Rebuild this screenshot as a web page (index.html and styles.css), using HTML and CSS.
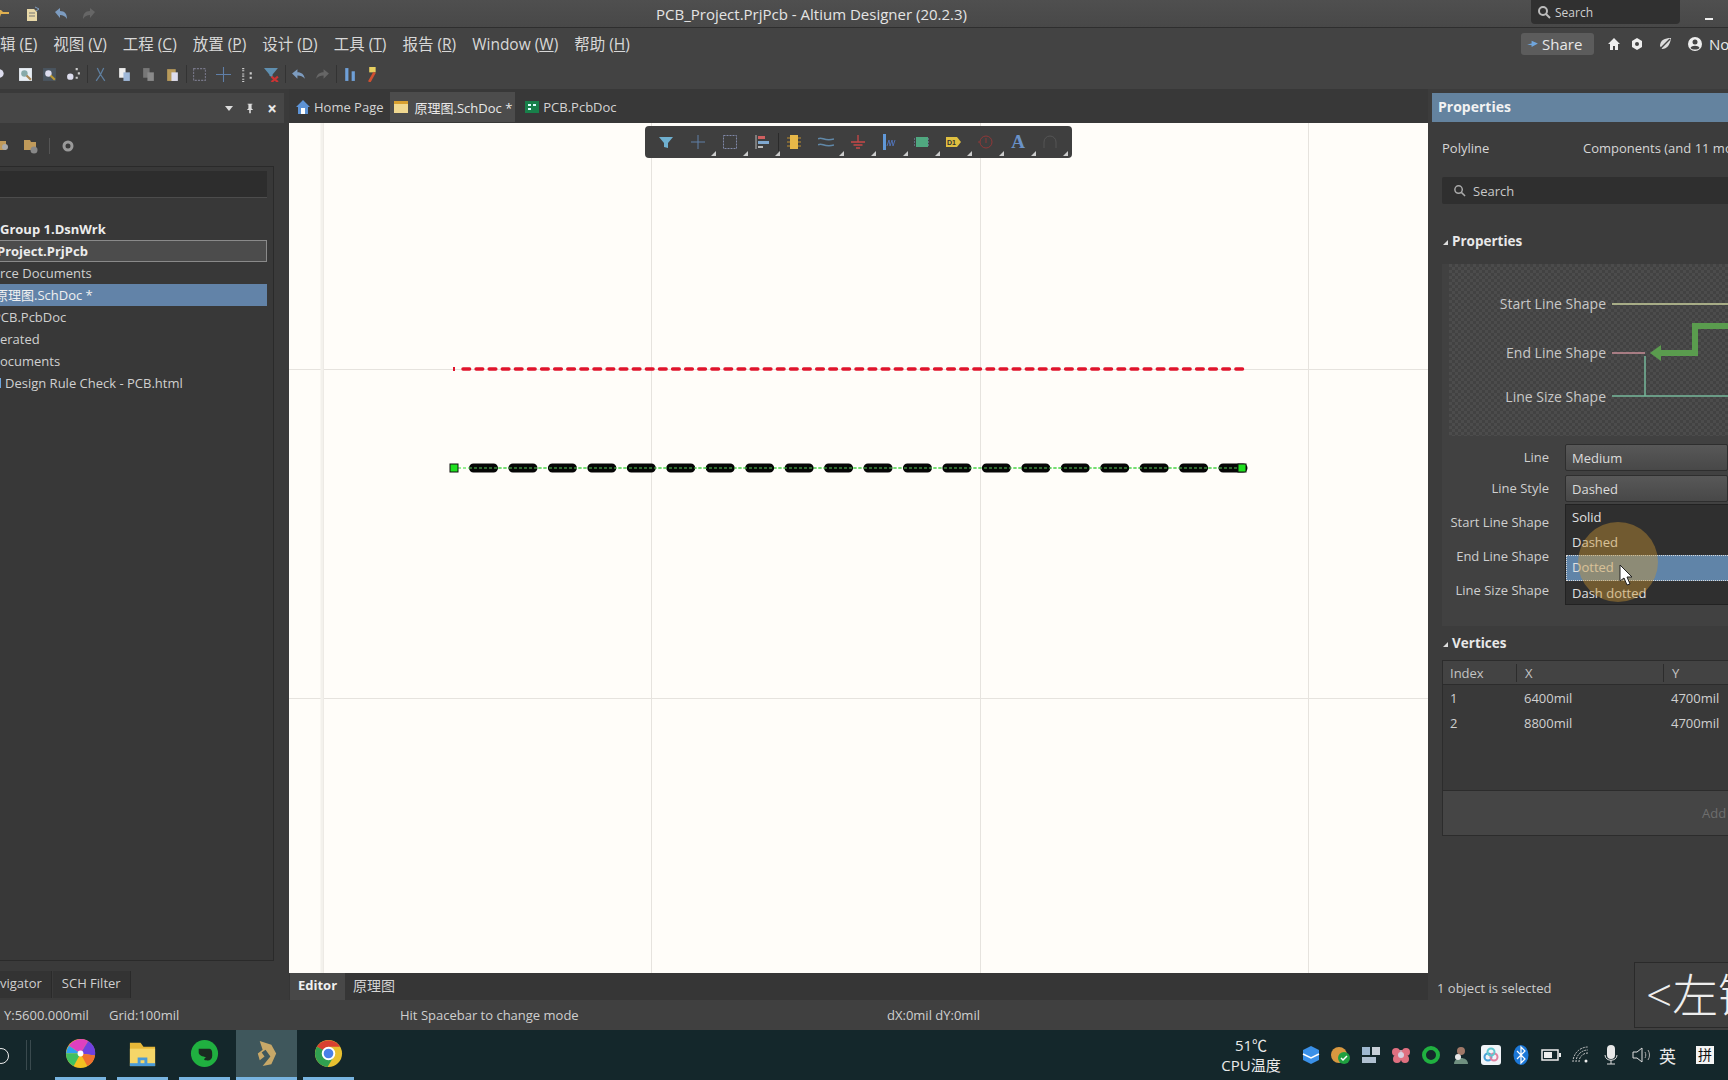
FILE: index.html

```html
<!DOCTYPE html>
<html lang="en">

<head>
    <meta charset="UTF-8">
    <title>PCB_Project.PrjPcb - Altium Designer (20.2.3)</title>
    <link rel="stylesheet" href="styles.css">
</head>

<body>
    <div class="app">
        <header class="titlebar">
            <div class="quick-icons">
                <svg class="ic" viewBox="0 0 16 16"><path d="M-4 4h8l2 2h6v2H4l-2 6h-6z" fill="#e0b050"/></svg>
                <svg class="ic" viewBox="0 0 16 16"><path d="M2 3h7l3 3v9H2z" fill="#e8d8a8"/><path d="M4 7h6M4 10h6" stroke="#777"/><path d="M10 1l4 2-3 2" fill="none" stroke="#7d9cc0"/></svg>
                <svg class="ic" viewBox="0 0 16 16"><path d="M2 6l5-4v3c5 0 7 3 7 8-2-3-4-4-7-4v3z" fill="#7d9cc0"/></svg>
                <svg class="ic" viewBox="0 0 16 16"><path d="M14 6L9 2v3C4 5 2 8 2 13c2-3 4-4 7-4v3z" fill="#666"/></svg>
            </div>
            <div class="title-text">PCB_Project.PrjPcb - Altium Designer (20.2.3)</div>
            <div class="title-search">
                <svg class="search-ic" viewBox="0 0 14 14"><circle cx="6" cy="6" r="4" fill="none" stroke="#bbb" stroke-width="2"/><path d="M9 9l4 4" stroke="#bbb" stroke-width="2"/></svg>
                Search
            </div>
            <div class="minimize"></div>
        </header>

        <nav class="menubar">
            <div class="menu-items">
                <span>辑 (<u>E</u>)</span>
                <span>视图 (<u>V</u>)</span>
                <span>工程 (<u>C</u>)</span>
                <span>放置 (<u>P</u>)</span>
                <span>设计 (<u>D</u>)</span>
                <span>工具 (<u>T</u>)</span>
                <span>报告 (<u>R</u>)</span>
                <span>Window (<u>W</u>)</span>
                <span>帮助 (<u>H</u>)</span>
            </div>
            <div class="menu-right">
                <div class="share-btn">
                    <svg class="share-ic" viewBox="0 0 12 10"><path d="M0 6l5-1V2l7 3-7 4V7z" fill="#6fa5dc"/></svg>
                    Share
                </div>
                <svg class="ic-sm home-ic" viewBox="0 0 14 14"><path d="M7 1l6 6h-2v6H8V9H6v4H3V7H1z" fill="#eee"/></svg>
                <svg class="ic-sm" viewBox="0 0 14 14"><path d="M7 1l5 3v6l-5 3-5-3V4z" fill="#eee"/><circle cx="7" cy="7" r="2" fill="#444"/></svg>
                <svg class="ic-sm leaf-ic" viewBox="0 0 14 14"><path d="M13 1C7 1 2 3 2 9l2 3c5 0 8-4 9-11z" fill="#ddd"/><path d="M1 13L12 2" stroke="#444" stroke-width="1.5"/></svg>
                <svg class="ic-md" viewBox="0 0 16 16"><circle cx="8" cy="8" r="7" fill="#eee"/><circle cx="8" cy="6" r="2.5" fill="#444"/><path d="M3.5 12c1-3 8-3 9 0-2 2-7 2-9 0z" fill="#444"/></svg>
                <span class="user-name">Not Signed In</span>
            </div>
        </nav>

        <div class="toolbar">
            <svg class="tb tb-first" viewBox="0 0 14 14"><circle cx="5" cy="6" r="4" fill="#dde" /></svg>
            <svg class="tb" viewBox="0 0 14 14"><rect x="1" y="1" width="12" height="12" fill="#e8eef5"/><circle cx="6" cy="6" r="3" fill="#8aa"/><path d="M8 8l4 4" stroke="#a85" stroke-width="2"/></svg>
            <svg class="tb" viewBox="0 0 14 14"><rect x="1" y="1" width="12" height="12" fill="#4a5560"/><circle cx="6" cy="6" r="3" fill="#dde"/><path d="M8 8l4 4" stroke="#b93" stroke-width="2"/></svg>
            <svg class="tb" viewBox="0 0 14 14"><circle cx="4" cy="9" r="3" fill="#dde"/><path d="M10 1v2M12 5v2M10 9v2" stroke="#ccc" stroke-width="2"/></svg>
            <i class="tb-sep"></i>
            <svg class="tb" viewBox="0 0 14 14"><path d="M4 1l3 6 3-6M7 7l-4 6M7 7l4 6" fill="none" stroke="#5f7f9f" stroke-width="1.2"/></svg>
            <svg class="tb" viewBox="0 0 14 14"><rect x="2" y="1" width="6" height="9" fill="#eee"/><rect x="6" y="5" width="6" height="8" fill="#9fb8d8"/></svg>
            <svg class="tb" viewBox="0 0 14 14"><rect x="2" y="1" width="6" height="9" fill="#777"/><rect x="6" y="5" width="6" height="8" fill="#8a8a8a"/></svg>
            <svg class="tb" viewBox="0 0 14 14"><rect x="2" y="2" width="8" height="11" fill="#b89a5a"/><rect x="6" y="5" width="6" height="8" fill="#dde"/></svg>
            <i class="tb-sep"></i>
            <svg class="tb" viewBox="0 0 14 14"><rect x="1.5" y="1.5" width="11" height="11" fill="none" stroke="#778" stroke-dasharray="2 1"/></svg>
            <svg class="tb" viewBox="0 0 14 14"><path d="M7 0v14M0 7h14" stroke="#5f7fa8"/></svg>
            <svg class="tb" viewBox="0 0 14 14"><path d="M3 1v3M3 6v3M3 11v3" stroke="#ccc" stroke-width="2" stroke-dasharray="1 1"/><path d="M10 5v2M10 9v2" stroke="#ccc" stroke-width="2"/></svg>
            <svg class="tb" viewBox="0 0 14 14"><path d="M0 1h13L8 7v3L5 8V7z" fill="#5f8fb0"/><path d="M7 9l6 5M13 9l-6 5" stroke="#c33" stroke-width="2"/></svg>
            <i class="tb-sep"></i>
            <svg class="tb" viewBox="0 0 14 14"><path d="M1 6l5-4v3c4 0 6 2 7 6-2-2-4-3-7-3v3z" fill="#7d9cc0"/></svg>
            <svg class="tb" viewBox="0 0 14 14"><path d="M13 6L8 2v3C4 5 2 7 1 11c2-2 4-3 7-3v3z" fill="#666"/></svg>
            <i class="tb-sep"></i>
            <svg class="tb" viewBox="0 0 14 14"><path d="M3 1h3v12H3z" fill="#6fa0d8"/><path d="M9 4h3v9H9z" fill="#6fa0d8"/></svg>
            <svg class="tb" viewBox="0 0 14 14"><rect x="3" y="0" width="6" height="5" fill="#e8d060"/><path d="M8 5L3 14" stroke="#d05030" stroke-width="2.5"/></svg>
        </div>

        <main class="workspace">
            <aside class="left-panel">
                <div class="panel-head">
                    <span class="head-arrow"></span>
                    <svg class="pin" viewBox="0 0 10 12"><path d="M2 0h6v1H7v5l2 2H6v4H4V8H1l2-2V1H2z" fill="#ddd"/></svg>
                    <span class="head-close">×</span>
                </div>
                <div class="panel-tools">
                    <svg class="ic" viewBox="0 0 16 16"><path d="M-6 3h12v9H-6z" fill="#c09a5a"/><circle cx="5" cy="9" r="3" fill="#aaa"/></svg>
                    <svg class="ic" viewBox="0 0 16 16"><path d="M1 2h6l1 2h5v8H1z" fill="#c09a5a"/><circle cx="11" cy="12" r="3.5" fill="#888"/></svg>
                    <i class="tools-sep"></i>
                    <svg class="ic gear" viewBox="0 0 16 16"><circle cx="8" cy="8" r="4" fill="none" stroke="#999" stroke-width="3"/></svg>
                </div>
                <div class="tree-frame">
                    <div class="tree-search"></div>
                    <div class="tree">
                        <div class="tree-row strong">Group 1.DsnWrk</div>
                        <div class="tree-row strong current"><span class="cut-a">Project.PrjPcb</span></div>
                        <div class="tree-row">rce Documents</div>
                        <div class="tree-row selected"><span class="cut-b">原理图.SchDoc *</span></div>
                        <div class="tree-row"><span class="cut-c">PCB.PcbDoc</span></div>
                        <div class="tree-row">erated</div>
                        <div class="tree-row">ocuments</div>
                        <div class="tree-row file"><i class="file-ic"></i>Design Rule Check - PCB.html</div>
                    </div>
                </div>
                <div class="panel-tabs">
                    <span class="panel-tab nav-tab">vigator</span>
                    <span class="panel-tab">SCH Filter</span>
                </div>
            </aside>

            <section class="editor">
                <div class="doc-tabs">
                    <div class="doc-tab">
                        <svg class="ic-sm" viewBox="0 0 14 14"><path d="M7 0l7 7h-2v7H2V7H0z" fill="#5d93d6"/><rect x="5" y="8" width="4" height="6" fill="#fff"/></svg>
                        Home Page
                    </div>
                    <div class="doc-tab active">
                        <svg class="ic-sm" viewBox="0 0 14 14"><rect x="0" y="1" width="14" height="12" fill="#f0d890"/><rect x="0" y="1" width="14" height="3" fill="#d8a030"/></svg>
                        原理图.SchDoc *
                    </div>
                    <div class="doc-tab">
                        <svg class="ic-sm" viewBox="0 0 14 14"><rect x="0" y="1" width="14" height="12" fill="#18804a"/><path d="M3 4h3v2H3zM8 4h3v2H8zM3 8h3v2H3z" fill="#dff"/></svg>
                        PCB.PcbDoc
                    </div>
                </div>

                <div class="canvas">
                    <svg class="sheet" viewBox="0 0 1139 850">
                        <path d="M34.5 0v850M362.5 0v850M691.5 0v850M1019.5 0v850M0 246.5h1139M0 575.5h1139" stroke="#e6e3de" fill="none"/>
                        <path d="M33 0v850" stroke="#f3f1ec" stroke-width="3"/>
                        <!-- red polyline -->
                        <path d="M164 246h2" stroke="#e0142c" stroke-width="4"/>
                        <line x1="174" y1="246" x2="955" y2="246" stroke="#e0142c" stroke-width="3.5" stroke-dasharray="6.6 6.5" stroke-linecap="round"/>
                        <!-- selected polyline -->
                        <line x1="164" y1="345" x2="953" y2="345" stroke="#2ee02e" stroke-dasharray="3 2"/>
                        <line x1="184.5" y1="345" x2="954" y2="345" stroke="#060606" stroke-width="9" stroke-linecap="round" stroke-dasharray="20 19.45"/>
                        <line x1="180" y1="345" x2="950" y2="345" stroke="#5c5" stroke-dasharray="3 2"/>
                        <rect x="161" y="341" width="8" height="8" fill="#1fe01f" stroke="#111"/>
                        <rect x="949" y="341" width="8" height="8" fill="#1fe01f" stroke="#111"/>
                    </svg>

                    <div class="float-bar">
                        <div class="fb"><svg viewBox="0 0 16 16"><path d="M1 3h14L10 9v5l-4-1V9z" fill="#6fb0d0"/></svg></div>
                        <div class="fb more"><svg viewBox="0 0 16 16"><path d="M8 1v14M1 8h14" stroke="#6080a8"/></svg></div>
                        <div class="fb more"><svg viewBox="0 0 16 16"><rect x="1.5" y="1.5" width="13" height="13" fill="none" stroke="#8088a8" stroke-dasharray="2 1"/></svg></div>
                        <div class="fb more"><svg viewBox="0 0 16 16"><path d="M2 1v14" stroke="#bbb"/><rect x="4" y="2" width="7" height="3" fill="#d06060"/><rect x="4" y="7" width="11" height="3" fill="#80a8d0"/><rect x="4" y="12" width="5" height="2" fill="#bbb"/></svg></div>
                        <i class="fb-sep"></i>
                        <div class="fb"><svg viewBox="0 0 16 16"><rect x="4" y="1" width="8" height="14" fill="#e8b848"/><path d="M1 4h3M1 8h3M1 12h3M12 4h3M12 8h3M12 12h3" stroke="#c09030"/></svg></div>
                        <div class="fb more"><svg viewBox="0 0 16 16"><path d="M0 5c4-3 6 3 16 0M0 11c4-3 6 3 16 0" fill="none" stroke="#6088a8" stroke-width="1.5"/></svg></div>
                        <div class="fb more"><svg viewBox="0 0 16 16"><path d="M8 1v7M1 8h14M3.5 11h9M6 14h4" stroke="#c84848" stroke-width="1.3"/></svg></div>
                        <div class="fb more"><svg viewBox="0 0 16 16"><rect x="1" y="0" width="3" height="16" fill="#6098d8"/><path d="M5 12l2-6 1 6 2-6 1 6 2-6" fill="none" stroke="#5070b0"/></svg></div>
                        <div class="fb more"><svg viewBox="0 0 16 16"><path d="M0 5h16M0 8h16M0 11h16" stroke="#8098c0" stroke-dasharray="1 1"/><rect x="2" y="3" width="12" height="10" fill="#50a880"/></svg></div>
                        <div class="fb more"><svg viewBox="0 0 16 16"><path d="M0 3h11l4 5-4 5H0z" fill="#e0c040"/><text x="1" y="11" class="tag-text">D1</text></svg></div>
                        <div class="fb more"><svg viewBox="0 0 16 16"><circle cx="8" cy="8" r="6" fill="none" stroke="#903838"/><path d="M8 4v5M0 8h2" stroke="#903838"/></svg></div>
                        <div class="fb more"><span class="fb-text">A</span></div>
                        <div class="fb more"><svg viewBox="0 0 16 16"><path d="M2 14V8a6 6 0 0 1 12 0v6" fill="none" stroke="#555"/></svg></div>
                    </div>
                </div>

                <div class="sheet-tabs">
                    <span class="sheet-tab on">Editor</span>
                    <span class="sheet-tab cn">原理图</span>
                </div>
            </section>

            <aside class="right-panel">
                <div class="props-head">Properties</div>
                <div class="props-body">
                    <div class="kind-row">
                        <span>Polyline</span>
                        <span>Components (and 11 more)</span>
                    </div>
                    <div class="props-search">
                        <svg class="search-ic" viewBox="0 0 14 14"><circle cx="6" cy="6" r="4" fill="none" stroke="#aaa" stroke-width="1.6"/><path d="M9 9l4 4" stroke="#aaa" stroke-width="1.6"/></svg>
                        Search
                    </div>
                    <div class="section-title">Properties</div>
                    <div class="section-box">
                        <div class="diagram">
                            <div class="dia-label dia-start">Start Line Shape</div>
                            <div class="dia-label dia-end">End Line Shape</div>
                            <div class="dia-label dia-size">Line Size Shape</div>
                            <svg class="dia-lines" viewBox="0 0 280 172">
                                <path d="M163 40h120" stroke="#c9cf9c" stroke-width="1.5"/>
                                <path d="M163 89h33" stroke="#c98f98" stroke-width="1.5"/>
                                <path d="M163 132h120M196 92v40" stroke="#75b89a" stroke-width="1.5"/>
                                <path d="M283 62h-37v27h-40" fill="none" stroke="#5a9c4e" stroke-width="6"/>
                                <path d="M201 89l11-8v16z" fill="#5a9c4e"/>
                            </svg>
                        </div>
                        <div class="field"><label>Line</label><div class="combo">Medium</div></div>
                        <div class="field"><label>Line Style</label><div class="combo">Dashed</div></div>
                        <div class="field tall"><label>Start Line Shape</label><div></div></div>
                        <div class="field tall"><label>End Line Shape</label><div></div></div>
                        <div class="field tall"><label>Line Size Shape</label><div></div></div>

                        <div class="drop-list">
                            <div class="drop-item">Solid</div>
                            <div class="drop-item">Dashed</div>
                            <div class="drop-item hot">Dotted</div>
                            <div class="drop-item">Dash dotted</div>
                        </div>
                        <div class="click-halo"></div>
                        <svg class="pointer" viewBox="0 0 14 22"><path d="M1 1v16l4-3 3 7 3-1-3-7h5z" fill="#fff" stroke="#222"/></svg>
                    </div>

                    <div class="section-title vert-title">Vertices</div>
                    <div class="vert-table">
                        <div class="vert-row vert-head"><span>Index</span><span class="col-x">X</span><span class="col-y">Y</span></div>
                        <div class="vert-row"><span>1</span><span class="col-x">6400mil</span><span class="col-y">4700mil</span></div>
                        <div class="vert-row"><span>2</span><span class="col-x">8800mil</span><span class="col-y">4700mil</span></div>
                        <div class="vert-foot"><span class="add-btn">Add</span></div>
                    </div>
                    <div class="selected-note">1 object is selected</div>
                </div>
            </aside>
        </main>

        <footer class="statusbar">
            <span class="st-xy">Y:5600.000mil</span>
            <span class="st-grid">Grid:100mil</span>
            <span class="st-hint">Hit Spacebar to change mode</span>
            <span class="st-delta">dX:0mil dY:0mil</span>
        </footer>

        <div class="taskbar">
            <div class="task-left">
                <i class="task-circle"></i>
                <i class="task-grip"></i>
                <div class="task-app">
                    <svg viewBox="0 0 32 32"><circle cx="16" cy="16" r="15" fill="#f4c020"/><path d="M16 16L4 8A15 15 0 0 1 24 3z" fill="#e040c0"/><path d="M16 16L24 3a15 15 0 0 1 7 15z" fill="#7040e0"/><path d="M16 16L1 16a15 15 0 0 1 3-8z" fill="#30a0f0"/><path d="M16 16L1 16a15 15 0 0 0 8 13z" fill="#40c060"/><path d="M16 16l15 2a15 15 0 0 1-8 11z" fill="#f07030"/><circle cx="16" cy="16" r="3" fill="#fff"/></svg>
                </div>
                <div class="task-app">
                    <svg viewBox="0 0 32 32"><path d="M3 5h11l3 4h12v20H3z" fill="#e8b838"/><path d="M3 11h26v18H3z" fill="#f6d668"/><path d="M11 28v-8h10v8h-3v-5h-4v5z" fill="#4a9ad8"/><path d="M3 26h26v3H3z" fill="#4a9ad8"/></svg>
                </div>
                <div class="task-app">
                    <svg viewBox="0 0 32 32"><circle cx="16" cy="16" r="14" fill="#20b040"/><path d="M10 11h11c3 0 3 4 3 7 0 4-3 6-6 5-4 0-2-3 0-3-4-1-8-2-8-5z" fill="#1a2a20"/></svg>
                </div>
                <div class="task-app running">
                    <svg viewBox="0 0 32 32"><path d="M9 3l12 4 5 9-5 11-9 2 8-10-5-7-4 3 3 4-5 4-2-7 5-4z" fill="#c8a868"/></svg>
                </div>
                <div class="task-app">
                    <svg viewBox="0 0 32 32"><circle cx="16" cy="16" r="14" fill="#e8c030"/><path d="M16 16L4 9a14 14 0 0 1 24 0H16z" fill="#d84030"/><path d="M4 9a14 14 0 0 0 11 21l7-12z" fill="#30a050"/><circle cx="16" cy="16" r="6" fill="#4a80e8" stroke="#fff" stroke-width="2"/></svg>
                </div>
            </div>
            <div class="task-right">
                <div class="temp">51℃<br>CPU温度</div>
                <div class="tray">
                    <svg viewBox="0 0 20 20"><path d="M10 1l8 4v10l-8 4-8-4V5z" fill="#3a90e8"/><path d="M2 9l8 4 8-4" fill="none" stroke="#fff" stroke-width="1.5"/></svg>
                    <svg viewBox="0 0 20 20"><circle cx="8" cy="10" r="8" fill="#d89840"/><circle cx="13" cy="13" r="6" fill="#20a040"/><path d="M10 13l2 2 4-4" fill="none" stroke="#fff" stroke-width="1.5"/></svg>
                    <svg viewBox="0 0 20 20"><rect x="1" y="2" width="8" height="8" fill="#9fb8d0"/><rect x="11" y="2" width="8" height="8" fill="#c8d0d8"/><rect x="1" y="12" width="14" height="6" fill="#b0c0d0"/></svg>
                    <svg viewBox="0 0 20 20"><circle cx="10" cy="10" r="5" fill="#d0a0b0"/><circle cx="5" cy="7" r="4" fill="#e07080"/><circle cx="15" cy="7" r="4" fill="#e07080"/><circle cx="6" cy="14" r="4" fill="#e07080"/><circle cx="14" cy="14" r="4" fill="#e07080"/><circle cx="10" cy="10" r="3" fill="#d8d0e0"/></svg>
                    <svg viewBox="0 0 20 20"><circle cx="10" cy="10" r="7" fill="none" stroke="#20b040" stroke-width="4"/></svg>
                    <svg viewBox="0 0 20 20"><circle cx="10" cy="6" r="4" fill="#a07868"/><path d="M3 19c0-8 14-8 14 0z" fill="#709080"/><circle cx="7" cy="12" r="3" fill="#e8e8e8"/></svg>
                    <svg viewBox="0 0 20 20"><rect width="20" height="20" rx="3" fill="#f0f4f8"/><circle cx="7" cy="12" r="3.5" fill="none" stroke="#48a0d8" stroke-width="2"/><circle cx="13" cy="12" r="3.5" fill="none" stroke="#e080a0" stroke-width="2"/><circle cx="10" cy="7" r="3.5" fill="none" stroke="#60c8d0" stroke-width="2"/></svg>
                    <svg viewBox="0 0 20 20"><ellipse cx="10" cy="10" rx="7.5" ry="10" fill="#1c78d8"/><path d="M6 6l8 8-4 4V2l4 4-8 8" fill="none" stroke="#fff" stroke-width="1.2"/></svg>
                    <svg viewBox="0 0 20 20"><rect x="1" y="5" width="16" height="10" fill="none" stroke="#eee" stroke-width="1.5"/><rect x="3" y="7" width="8" height="6" fill="#eee"/><rect x="18" y="8" width="2" height="4" fill="#eee"/></svg>
                    <svg viewBox="0 0 20 20"><path d="M2 17a15 15 0 0 1 15-15M5 17A12 12 0 0 1 17 5M8 17a9 9 0 0 1 9-9" fill="none" stroke="#ccc" stroke-dasharray="2 1"/><circle cx="15" cy="16" r="1.5" fill="#eee"/></svg>
                    <svg viewBox="0 0 20 20"><rect x="6" y="0" width="8" height="14" rx="4" fill="#e8e8e8"/><path d="M4 10c0 7 12 7 12 0M10 15v4M6 19h8" fill="none" stroke="#ddd"/></svg>
                    <svg viewBox="0 0 20 20"><path d="M2 7h4l5-4v14l-5-4H2z" fill="none" stroke="#ddd"/><path d="M14 7c1 2 1 4 0 6M17 5c2 3 2 7 0 10" fill="none" stroke="#aaa"/></svg>
                </div>
                <span class="ime">英</span>
                <span class="ime-box">拼</span>
            </div>
        </div>

        <div class="caption">&lt;左键</div>
    </div>
</body>

</html>
```

FILE: styles.css

```css
html,
body {
    margin: 0;
    padding: 0;
    height: 100%;
    overflow: hidden;
    background-color: #3d3d3d;
}

body {
    font-family: "Open Sans", "Noto Sans CJK SC", sans-serif;
    font-size: 13px;
    color: #d6d6d6;
}

svg {
    display: block;
    flex: none;
}

i {
    display: block;
    flex: none;
}

.app {
    position: relative;
    width: 1728px;
    height: 1080px;
    display: flex;
    flex-direction: column;
    overflow: hidden;
}

.ic {
    width: 16px;
    height: 16px;
}

.ic-sm {
    width: 14px;
    height: 14px;
}

.ic-md {
    width: 16px;
    height: 16px;
}

/* title bar */
.titlebar {
    height: 27px;
    flex: none;
    display: flex;
    align-items: center;
    background: linear-gradient(#4f4f4f, #484848);
    border-bottom: 1px solid #2e2e2e;
}

.quick-icons {
    width: 110px;
    display: flex;
    gap: 12px;
    margin-left: -3px;
    margin-right: 549px;
}

.title-text {
    width: 326px;
    font-size: 15px;
    color: #e4e4e4;
    white-space: nowrap;
}

.title-search {
    margin-left: 549px;
    width: 149px;
    height: 24px;
    align-self: flex-start;
    box-sizing: border-box;
    padding-left: 6px;
    display: flex;
    align-items: center;
    gap: 4px;
    background-color: #303030;
    border-radius: 0 0 4px 4px;
    font-size: 12px;
    color: #cfcfcf;
}

.search-ic {
    width: 14px;
    height: 14px;
}

.minimize {
    width: 8px;
    height: 2px;
    margin: 10px 0 0 25px;
    background-color: #eee;
}

/* menu */
.menubar {
    height: 31px;
    flex: none;
    display: flex;
    align-items: center;
    justify-content: space-between;
    background-color: #434343;
}

.menu-items {
    display: flex;
    align-items: baseline;
    gap: 16px;
    font-size: 15.5px;
    color: #d8d8d8;
    white-space: nowrap;
}

.menu-right {
    display: flex;
    align-items: center;
    width: 207px;
    flex: none;
    overflow: hidden;
    white-space: nowrap;
}

.share-btn {
    width: 73px;
    height: 22px;
    flex: none;
    box-sizing: border-box;
    display: flex;
    align-items: center;
    gap: 4px;
    padding-left: 6px;
    background-color: #5c5c5c;
    border-radius: 3px;
    font-size: 15px;
    color: #e8e8e8;
}

.share-ic {
    width: 11px;
    height: 9px;
}

.home-ic {
    margin-left: 13px;
    margin-right: 9px;
}

.leaf-ic {
    margin-left: 14px;
    margin-right: 15px;
}

.user-name {
    margin-left: 6px;
    font-size: 15px;
    color: #e8e8e8;
}

/* toolbar */
.toolbar {
    height: 30px;
    flex: none;
    display: flex;
    align-items: center;
    gap: 9px;
    background-color: #434343;
}

.tb {
    width: 15px;
    height: 15px;
}

.tb-first {
    margin-left: -6px;
}

.tb-sep {
    width: 1px;
    height: 18px;
    background-color: #333;
    margin: 0 -3.5px;
}

/* main area */
.workspace {
    flex: 1;
    display: flex;
    min-height: 0;
}

.left-panel {
    width: 289px;
    flex: none;
    box-sizing: border-box;
    padding: 4px 5px 2px 0;
    display: flex;
    flex-direction: column;
    background-color: #3a3a3a;
}

.panel-head {
    height: 30px;
    flex: none;
    display: flex;
    align-items: center;
    justify-content: flex-end;
    gap: 13px;
    padding-right: 7px;
    background-color: #464646;
}

.head-arrow {
    width: 0;
    height: 0;
    border-left: 4px solid transparent;
    border-right: 4px solid transparent;
    border-top: 5px solid #ddd;
}

.pin {
    width: 8px;
    height: 11px;
}

.head-close {
    font-size: 17px;
    line-height: 1;
    font-weight: 700;
    color: #e8e8e8;
}

.panel-tools {
    height: 43px;
    flex: none;
    box-sizing: border-box;
    padding-top: 3px;
    display: flex;
    align-items: center;
    gap: 7px;
}

.tools-sep {
    width: 1px;
    height: 16px;
    background-color: #555;
    margin: 0 3px;
}

.tree-frame {
    flex: 1;
    min-height: 0;
    box-sizing: border-box;
    margin-right: 10px;
    padding: 4px 6px 0 0;
    border-top: 1px solid #2a2a2a;
    border-right: 1px solid #2a2a2a;
    border-bottom: 1px solid #2a2a2a;
    background-color: #383838;
}

.tree-search {
    height: 26px;
    background-color: #2d2d2d;
    border-bottom: 1px solid #4c4c4c;
}

.tree {
    padding-top: 20px;
}

.tree-row {
    height: 22px;
    box-sizing: border-box;
    line-height: 22px;
    white-space: nowrap;
    overflow: hidden;
    color: #d0d0d0;
}

.strong {
    font-weight: 700;
    color: #ececec;
}

.current {
    line-height: 20px;
    border: 1px solid #8a8a8a;
    border-left: none;
    background-color: #4c4c4c;
}

.selected {
    background-color: #6283a8;
    color: #f0f0f0;
}

.cut-a {
    margin-left: -3px;
}

.cut-b {
    margin-left: -5px;
}

.cut-c {
    margin-left: -7px;
}

.file {
    display: flex;
    align-items: center;
    gap: 4px;
}

.file-ic {
    width: 1px;
    height: 10px;
    background-color: #6fa5dc;
}

.panel-tabs {
    height: 27px;
    flex: none;
    display: flex;
    margin-top: 10px;
}

.panel-tab {
    padding: 0 9px;
    line-height: 25px;
    color: #cfcfcf;
    background-color: #333;
    border-right: 1px solid #2a2a2a;
    margin-right: 1px;
}

.nav-tab {
    padding-left: 0;
}

/* centre */
.editor {
    width: 1139px;
    flex: none;
    display: flex;
    flex-direction: column;
    background-color: #3a3a3a;
}

.doc-tabs {
    height: 34px;
    flex: none;
    box-sizing: border-box;
    display: flex;
    align-items: flex-start;
    gap: 3px;
    padding: 3px 0 0 4px;
    background-color: #383838;
}

.doc-tab {
    height: 30px;
    box-sizing: border-box;
    display: flex;
    align-items: center;
    gap: 4px;
    padding: 0 3px;
    white-space: nowrap;
    color: #d4d4d4;
}

.doc-tab.active {
    background-color: #4c4c4c;
    color: #e8e8e8;
    gap: 7px;
    padding-left: 4px;
    margin-right: 4px;
}

.canvas {
    position: relative;
    height: 850px;
    flex: none;
    background-color: #fffdf9;
    overflow: hidden;
}

.sheet {
    width: 1139px;
    height: 850px;
}

.float-bar {
    position: absolute;
    left: 356px;
    top: 3px;
    height: 32px;
    width: 427px;
    box-sizing: border-box;
    padding-left: 5px;
    display: flex;
    align-items: center;
    background-color: #3f3f3f;
    border-radius: 4px;
}

.fb {
    position: relative;
    width: 32px;
    height: 32px;
    flex: none;
    display: flex;
    align-items: center;
    justify-content: center;
}

.fb svg {
    width: 16px;
    height: 16px;
}

.fb.more::after {
    content: "";
    position: absolute;
    right: -2px;
    bottom: 2px;
    border-left: 5px solid transparent;
    border-bottom: 5px solid #ccc;
}

.tag-text {
    font-family: "Liberation Sans", sans-serif;
    font-size: 7px;
    font-weight: 700;
    fill: #333;
}

.fb-text {
    font-family: "Liberation Serif", serif;
    font-size: 19px;
    font-weight: 700;
    color: #6a92c8;
}

.fb-sep {
    width: 1px;
    height: 18px;
    margin: 0 -1px 0 0;
    background-color: #2a2a2a;
}

.sheet-tabs {
    height: 28px;
    flex: none;
    display: flex;
    padding-left: 1px;
    background-color: #363636;
}

.sheet-tab {
    padding: 0 8px;
    line-height: 25px;
    color: #d4d4d4;
}

.sheet-tab.cn {
    font-size: 14px;
}

.sheet-tab.on {
    background-color: #484848;
    font-weight: 700;
    color: #f0f0f0;
}

/* right panel */
.right-panel {
    width: 300px;
    flex: none;
    box-sizing: border-box;
    padding: 4px 0 0 4px;
    display: flex;
    flex-direction: column;
    overflow: hidden;
    background-color: #3c3c3c;
}

.props-head {
    height: 29px;
    flex: none;
    padding-left: 6px;
    line-height: 28px;
    font-size: 14px;
    font-weight: 700;
    color: #f2f2f2;
    background-color: #64839f;
}

.props-body {
    position: relative;
    flex: 1;
    padding-left: 10px;
}

.kind-row {
    height: 52px;
    margin-bottom: 3px;
    display: flex;
    align-items: center;
    white-space: nowrap;
}

.kind-row span:first-child {
    width: 141px;
    flex: none;
}

.props-search {
    height: 27px;
    display: flex;
    align-items: center;
    gap: 7px;
    margin-right: -2px;
    padding-left: 11px;
    background-color: #2f2f2f;
    border-radius: 2px 0 0 2px;
    color: #c8c8c8;
}

.props-search .search-ic {
    width: 13px;
    height: 13px;
}

.section-title {
    height: 61px;
    box-sizing: border-box;
    padding: 26px 0 0 10px;
    line-height: 22px;
    font-size: 13.5px;
    font-weight: 700;
    color: #e8e8e8;
    position: relative;
}

.section-title::before {
    content: "";
    position: absolute;
    left: 1px;
    top: 36px;
    border-left: 5px solid transparent;
    border-bottom: 5px solid #ddd;
}

.section-box {
    position: relative;
    margin-top: -1px;
    height: 362px;
    padding-left: 7px;
    background-color: #414141;
    width: 279px;
}

.diagram {
    position: relative;
    height: 172px;
    background-color: #4a4a4a;
    background-image: conic-gradient(#424242 25%, #4c4c4c 0 50%, #424242 0 75%, #4c4c4c 0);
    background-size: 6px 6px;
    margin-bottom: 8px;
}

.dia-label {
    position: absolute;
    right: 122px;
    font-size: 14px;
    white-space: nowrap;
    color: #c8c8c8;
}

.dia-start {
    top: 30px;
}

.dia-end {
    top: 79px;
}

.dia-size {
    top: 123px;
}

.dia-lines {
    position: absolute;
    left: 0;
    top: 0;
    width: 280px;
    height: 172px;
}

.field {
    height: 31px;
    display: grid;
    grid-template-columns: 100px 1fr;
    column-gap: 16px;
    align-items: start;
}

.field label {
    line-height: 27px;
    text-align: right;
    white-space: nowrap;
    color: #cfcfcf;
    margin-left: -8px;
}

.field.tall {
    height: 34px;
}

.field.tall label {
    line-height: 32px;
}

.combo {
    height: 27px;
    box-sizing: border-box;
    line-height: 26px;
    padding-left: 6px;
    background: linear-gradient(#585858, #484848);
    border: 1px solid #2e2e2e;
    border-radius: 2px;
    color: #dcdcdc;
}

.drop-list {
    position: absolute;
    left: 123px;
    top: 240px;
    width: 200px;
    height: 101px;
    box-sizing: border-box;
    background-color: #2f2f2f;
    border: 1px solid #222;
}

.drop-item {
    height: 25.2px;
    line-height: 25px;
    padding-left: 6px;
    color: #e0e0e0;
}

.drop-item.hot {
    background-color: #6084a8;
    outline: 1px dotted #d8d8d8;
    outline-offset: -1px;
}

.click-halo {
    position: absolute;
    left: 136px;
    top: 258px;
    width: 80px;
    height: 80px;
    border-radius: 50%;
    background-color: rgba(205, 150, 50, 0.42);
}

.pointer {
    position: absolute;
    left: 177px;
    top: 300px;
    width: 14px;
    height: 22px;
}

.vert-title {
    height: 34px;
    padding-top: 6px;
}

.vert-title::before {
    top: 16px;
}

.vert-table {
    width: 300px;
    height: 176px;
    box-sizing: border-box;
    display: flex;
    flex-direction: column;
    background-color: #393939;
    border: 1px solid #2c2c2c;
}

.vert-row {
    height: 25px;
    display: flex;
    align-items: center;
    padding-left: 7px;
    color: #d0d0d0;
}

.vert-head {
    height: 23px;
    background-color: #434343;
    border-bottom: 1px solid #2c2c2c;
}

.vert-head span {
    color: #c4c4c4;
}

.vert-row span:first-child {
    width: 66px;
}

.col-x {
    width: 147px;
    padding-left: 8px;
    box-sizing: border-box;
}

.vert-head .col-x,
.vert-head .col-y {
    border-left: 1px solid #2c2c2c;
}

.col-y {
    padding-left: 8px;
}

.vert-foot {
    margin-top: auto;
    height: 44px;
    display: flex;
    align-items: center;
    padding-left: 259px;
    background-color: #454545;
    border-top: 1px solid #2c2c2c;
}

.add-btn {
    color: #6e6e6e;
}

.selected-note {
    position: absolute;
    left: 5px;
    top: 856px;
    line-height: 20px;
    color: #cccccc;
}

/* status */
.statusbar {
    height: 30px;
    flex: none;
    display: flex;
    align-items: center;
    background-color: #404040;
    white-space: nowrap;
    color: #cfcfcf;
}

.st-xy {
    margin-left: 4px;
    width: 105px;
}

.st-grid {
    width: 291px;
}

.st-hint {
    width: 487px;
}

/* taskbar */
.taskbar {
    height: 50px;
    flex: none;
    display: flex;
    justify-content: space-between;
    background-color: #14272b;
}

.task-left {
    display: flex;
    align-items: stretch;
}

.task-circle {
    width: 14px;
    height: 14px;
    margin: 18px 0 0 -7px;
    border: 1.5px solid #eee;
    border-radius: 50%;
}

.task-grip {
    width: 3px;
    height: 30px;
    margin: 10px 24px 0 17px;
    border-left: 1px solid #3a4a4e;
    border-right: 1px solid #3a4a4e;
}

.task-app {
    width: 51px;
    margin-right: 11px;
    box-sizing: border-box;
    display: flex;
    align-items: center;
    justify-content: center;
    border-bottom: 3px solid #78b4e0;
}

.task-app svg {
    width: 31px;
    height: 31px;
}

.task-app.running {
    width: 61px;
    margin: 0 6px 0 -5px;
    background-color: #3f575c;
}

.task-right {
    display: flex;
    align-items: center;
    color: #eaeaea;
}

.temp {
    width: 62px;
    text-align: center;
    font-size: 15px;
    line-height: 20px;
    margin-right: 19px;
}

.tray {
    display: flex;
    gap: 10px;
}

.tray svg {
    width: 20px;
    height: 20px;
}

.ime {
    margin: 0 20px 0 8px;
    font-size: 17px;
}

.ime-box {
    width: 18px;
    height: 18px;
    margin-right: 14px;
    background-color: #f4f4f4;
    color: #111;
    font-size: 14px;
    line-height: 18px;
    text-align: center;
}

/* video caption over the window */
.caption {
    position: absolute;
    left: 1634px;
    top: 962px;
    width: 110px;
    height: 66px;
    box-sizing: border-box;
    padding-left: 11px;
    background-color: #3f3f3f;
    border: 1px solid #2a2a2a;
    font-size: 46px;
    font-weight: 300;
    line-height: 62px;
    color: #eeeeee;
    white-space: nowrap;
}
```
